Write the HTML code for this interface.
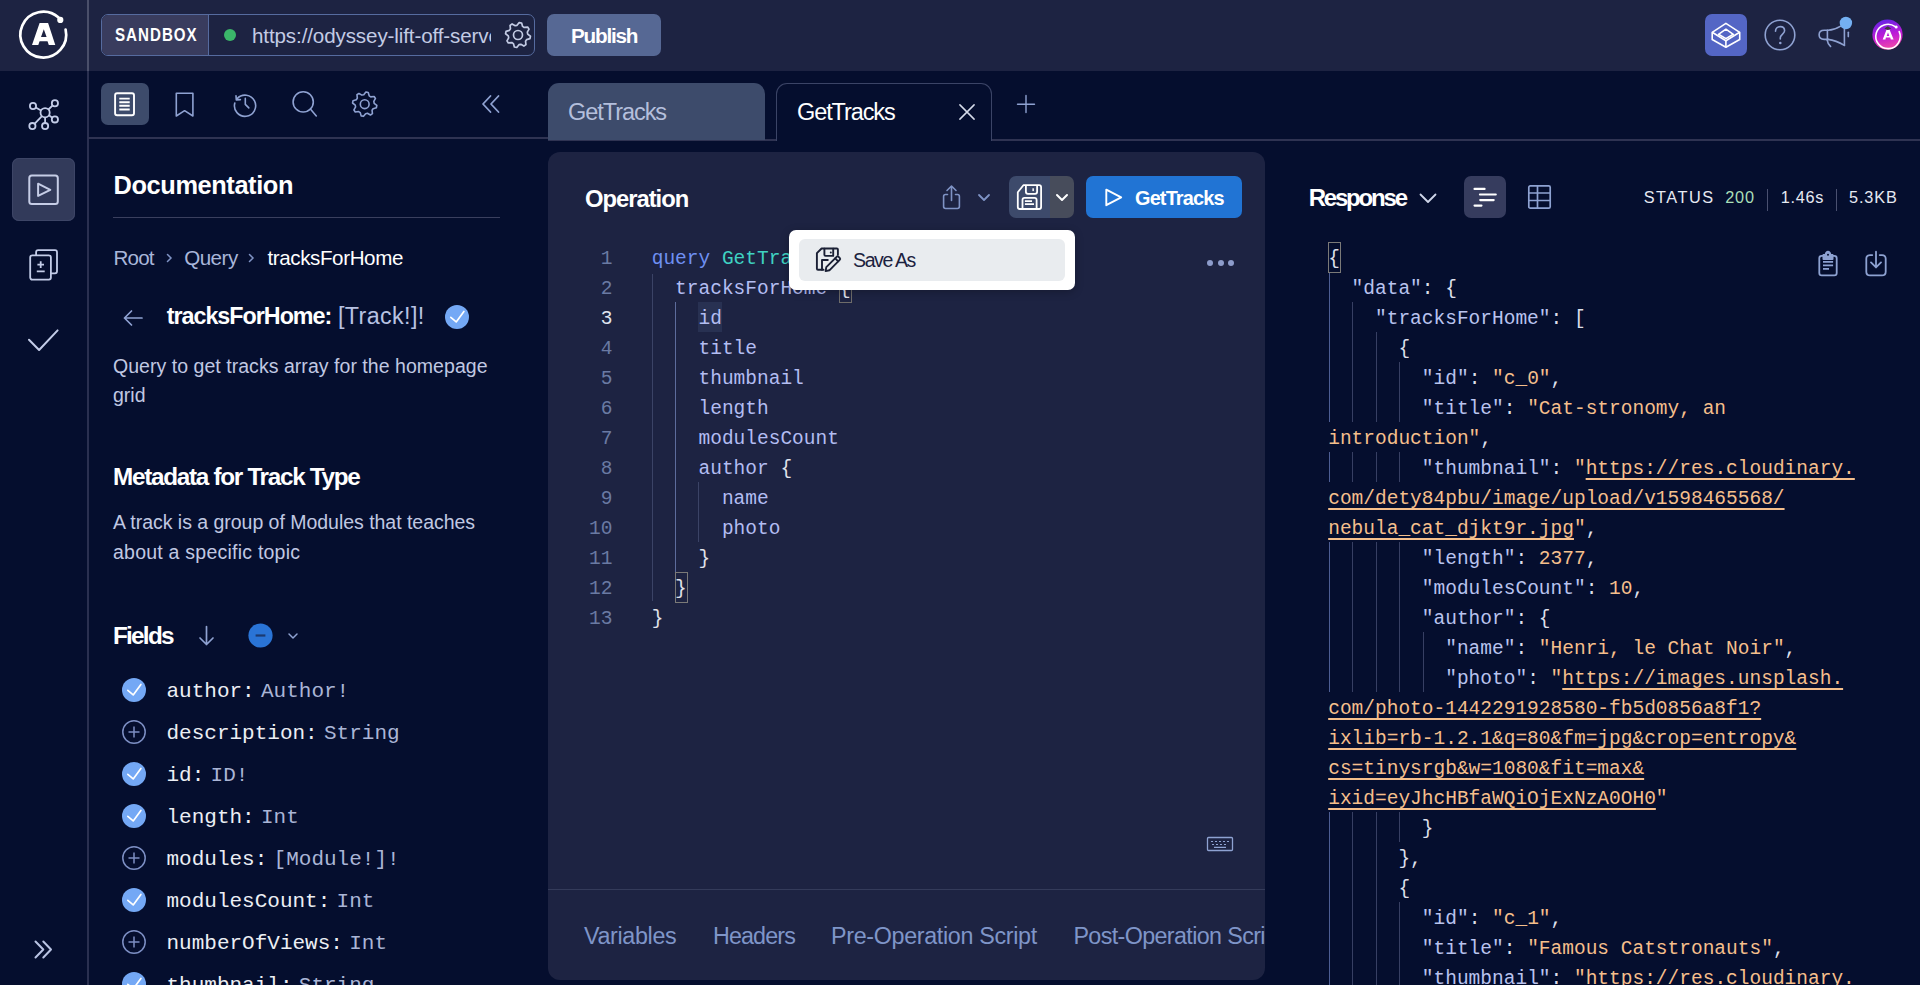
<!DOCTYPE html><html><head><meta charset="utf-8"><style>
html,body{margin:0;padding:0;width:1920px;height:985px;overflow:hidden;background:#050e2e;}
body{position:relative;font-family:'Liberation Sans', sans-serif;}
</style></head><body>
<div style="position:absolute;left:0px;top:0px;width:1920px;height:71px;background:#1d2342;"></div>
<div style="position:absolute;left:87px;top:0px;width:2px;height:71px;background:#4a4f6a;"></div>
<div style="position:absolute;left:87px;top:71px;width:2px;height:914px;background:#2a3050;"></div>
<svg style="position:absolute;left:14px;top:6px;" width="60" height="60" viewBox="0 0 60 60" fill="none"><path d="M44.6 11.6 A22.9 22.9 0 1 0 51.6 23.5" stroke="#fff" stroke-width="2.7" stroke-linecap="round"/>
<circle cx="46.3" cy="13.9" r="3.1" fill="#fff"/>
<path fill-rule="evenodd" d="M18 39 L25.6 17 L34.1 17 L41.3 39 L34.8 39 L33.5 35.3 L25.6 35.3 L24.3 39 Z M29.8 23.2 L27 30.9 L32.6 30.9 Z" fill="#fff"/></svg>
<div style="position:absolute;left:101px;top:14px;width:432px;height:40px;border:1.5px solid #566b9f;border-radius:7px;background:#1d2342;overflow:hidden"><div style="position:absolute;left:0;top:0;width:106px;height:40px;background:#393c5e;border-right:1.5px solid #566b9f"></div></div>
<div id="t_sandbox" style="position:absolute;left:114.50px;top:23.16px;height:25px;line-height:25px;font-family:'Liberation Sans', sans-serif;font-size:18px;font-weight:700;color:#ffffff;white-space:pre;letter-spacing:1.200px;transform:scaleX(0.8403);transform-origin:0 0;">SANDBOX</div>
<div style="position:absolute;left:224px;top:29px;width:12px;height:12px;border-radius:6px;background:#3bb76a"></div>
<div style="position:absolute;left:250px;top:14px;width:241px;height:42px;overflow:hidden">
<div id="t_url" style="position:absolute;left:2.00px;top:7.16px;height:29px;line-height:29px;font-family:'Liberation Sans', sans-serif;font-size:20.6px;font-weight:400;color:#c3cbe4;white-space:pre;letter-spacing:0.000px;letter-spacing:-0.12px">https://odyssey-lift-off-server.herokuapp.com/</div>
</div>
<svg style="position:absolute;left:500px;top:17px;" width="36" height="36" viewBox="0 0 36 36" fill="none"><path d="M19.23 5.56 L21.63 6.04 L22.60 9.40 L24.19 10.46 L27.66 10.07 L29.02 12.11 L27.33 15.17 L27.70 17.04 L30.44 19.23 L29.96 21.63 L26.60 22.60 L25.54 24.19 L25.93 27.66 L23.89 29.02 L20.83 27.33 L18.96 27.70 L16.77 30.44 L14.37 29.96 L13.40 26.60 L11.81 25.54 L8.34 25.93 L6.98 23.89 L8.67 20.83 L8.30 18.96 L5.56 16.77 L6.04 14.37 L9.40 13.40 L10.46 11.81 L10.07 8.34 L12.11 6.98 L15.17 8.67 L17.04 8.30 Z" stroke="#c3cbe4" stroke-width="1.7" stroke-linejoin="round"/><circle cx="18" cy="18" r="4.50" stroke="#c3cbe4" stroke-width="1.7"/></svg>
<div style="position:absolute;left:547px;top:14px;width:114px;height:42px;background:#566894;border-radius:7px;"></div>
<div id="t_publish" style="position:absolute;left:571.00px;top:21.32px;height:29px;line-height:29px;font-family:'Liberation Sans', sans-serif;font-size:20.7px;font-weight:700;color:#ffffff;white-space:pre;letter-spacing:-1.203px;">Publish</div>
<div style="position:absolute;left:1705px;top:14px;width:42px;height:42px;background:#5466c5;border-radius:7px;"></div>
<svg style="position:absolute;left:1705px;top:14px;" width="42" height="42" viewBox="0 0 42 42" fill="none"><g stroke="#fff" stroke-width="1.6" stroke-linejoin="round" fill="none">
<path d="M20.9 9.4 L34.7 18.3 L34.7 25.5 L20.9 33.3 L7.2 25.5 L7.2 18.3 Z"/>
<path d="M7.2 18.3 L20.9 26.7 L34.7 18.3"/><path d="M20.9 26.7 L20.9 33.3"/>
<path d="M20.9 15.2 L28.3 20.3 L20.9 24.6 L13.5 20.3 Z"/></g></svg>
<svg style="position:absolute;left:1762px;top:17px;" width="36" height="36" viewBox="0 0 36 36" fill="none"><circle cx="18" cy="18" r="14.8" stroke="#8fa2d2" stroke-width="1.6"/>
<path d="M13.5 14.3 C13.5 11.3 15.7 9.6 18.2 9.6 C20.8 9.6 22.6 11.4 22.6 13.8 C22.6 16.8 18.3 17.4 18.3 20.8 L18.3 22" stroke="#8fa2d2" stroke-width="1.6" stroke-linecap="round"/>
<circle cx="18.3" cy="26" r="1.3" fill="#8fa2d2"/></svg>
<svg style="position:absolute;left:1814px;top:15px;" width="40" height="40" viewBox="0 0 40 40" fill="none"><g stroke="#8fa2d2" stroke-width="1.6" stroke-linejoin="round" stroke-linecap="round" fill="none">
<path d="M14 15.3 Q20.5 15 26.7 11.1"/><path d="M30.4 13.75 L30.4 30.4"/><path d="M14 24.4 Q22 25.3 30.4 30.4"/>
<path d="M13.4 15.3 L13.4 25.3"/><path d="M13.4 15.3 L10.3 15.3 Q5.1 15.3 5.1 19.85 Q5.1 24.4 10.3 24.4 L14 24.4"/>
<path d="M13.2 25.2 Q13.8 29.5 16.6 31.5"/><path d="M34.3 17.3 L34.3 21.6"/></g>
<circle cx="31.9" cy="8" r="6.2" fill="#74b0f2"/></svg>
<svg style="position:absolute;left:1872.2px;top:19px" width="31" height="31" viewBox="0 0 31 31"><defs><linearGradient id="av" x1="0.3" y1="0" x2="0.5" y2="1"><stop offset="0" stop-color="#6224e6"/><stop offset="0.55" stop-color="#c01bd6"/><stop offset="1" stop-color="#f24aa6"/></linearGradient></defs>
<circle cx="15.5" cy="15.5" r="15.1" fill="url(#av)"/>
<path d="M23.2 7.6 A12.2 12.2 0 1 0 27.2 12.6" stroke="#fff" stroke-width="1.6" fill="none" stroke-linecap="round"/><circle cx="24.2" cy="7.9" r="1.5" fill="#fff"/>
<path fill-rule="evenodd" d="M10.7 20.4 L14.5 10.8 L17.6 10.8 L21.6 20.4 L18.8 20.4 L18.2 18.6 L13.9 18.6 L13.4 20.4 Z M16 13.6 L14.7 16.9 L17.3 16.9 Z" fill="#fff"/>
<path d="M12.3 9.4 L15.8 7.3 L19.2 9.4 L15.8 11 Z" fill="#3d3b40"/></svg>
<div style="position:absolute;left:0px;top:71px;width:87px;height:914px;background:#050e2e;"></div>
<svg style="position:absolute;left:25px;top:95px;" width="40" height="40" viewBox="0 0 40 40" fill="none"><g stroke="#c3cce8" stroke-width="1.8" fill="none"><circle cx="20.1" cy="17.7" r="4.6"/><circle cx="8" cy="11" r="3.1"/><circle cx="29.9" cy="8.3" r="3.1"/><circle cx="29.9" cy="24.4" r="3.1"/><circle cx="7.4" cy="31.1" r="3.1"/><circle cx="20.1" cy="31.1" r="3.1"/><path d="M16.08 15.47 L10.71 12.50 M23.42 14.52 L27.66 10.45 M23.90 20.30 L27.34 22.65 M16.94 21.04 L9.53 28.85 M20.10 22.30 L20.10 28.00"/></g></svg>
<div style="position:absolute;left:12px;top:158px;width:63px;height:63px;background:#323a5a;border-radius:7px;box-shadow:inset 0 0 0 1px #3d4566;"></div>
<svg style="position:absolute;left:25px;top:169px;" width="40" height="40" viewBox="0 0 40 40" fill="none"><rect x="4.3" y="6.6" width="28.5" height="28.4" rx="2.5" stroke="#c6cde6" stroke-width="2"/>
<path d="M13.1 14.7 L25.3 20.8 L13.1 26.9 Z" stroke="#c6cde6" stroke-width="2" stroke-linejoin="round"/></svg>
<svg style="position:absolute;left:23px;top:245px;" width="40" height="40" viewBox="0 0 40 40" fill="none"><g stroke="#c3cce8" stroke-width="1.8" fill="none" stroke-linejoin="round">
<path d="M13.1 10.4 L13.1 7.2 Q13.1 5.2 15.1 5.2 L32 5.2 Q34 5.2 34 7.2 L34 26.3 Q34 28.3 32 28.3 L27.9 28.3"/>
<rect x="7.2" y="10.4" width="20.7" height="24.2" rx="2"/>
<path d="M17.7 16.3 L17.7 23 M14.4 19.7 L21 19.7 M13.8 26.3 L21.7 26.3"/></g></svg>
<svg style="position:absolute;left:23px;top:319.5px;" width="40" height="40" viewBox="0 0 40 40" fill="none"><path d="M6 19.7 L16.1 30 L34.6 10.4" stroke="#c3cce8" stroke-width="2" fill="none" stroke-linecap="round" stroke-linejoin="round"/></svg>
<svg style="position:absolute;left:29px;top:934.7px;" width="30" height="30" viewBox="0 0 30 30" fill="none"><path d="M6.5 6.5 L14.3 14.5 L6.5 22.5 M14.3 6.5 L22 14.5 L14.3 22.5" stroke="#b9c3e3" stroke-width="2" fill="none" stroke-linecap="round" stroke-linejoin="round"/></svg>
<div style="position:absolute;left:101px;top:83px;width:48px;height:42px;background:#3d4b6b;border-radius:7px;"></div>
<svg style="position:absolute;left:110px;top:89px;" width="30" height="30" viewBox="0 0 30 30" fill="none"><rect x="5.1" y="4.3" width="18.9" height="21.9" rx="2" stroke="#fff" stroke-width="1.9"/>
<path d="M9.3 9.6 L19.7 9.6 M9.3 13.2 L19.7 13.2 M9.3 16.8 L19.7 16.8 M9.3 20.5 L19.7 20.5" stroke="#fff" stroke-width="1.9"/></svg>
<svg style="position:absolute;left:170px;top:89px;" width="30" height="30" viewBox="0 0 30 30" fill="none"><path d="M6.3 4.3 L22.9 4.3 L22.9 27 L14.6 21.7 L6.3 27 Z" stroke="#8fa2d2" stroke-width="1.6" stroke-linejoin="round"/></svg>
<svg style="position:absolute;left:230px;top:89px;" width="30" height="30" viewBox="0 0 30 30" fill="none"><g stroke="#8fa2d2" stroke-width="1.6" fill="none" stroke-linecap="round" stroke-linejoin="round">
<path d="M7.2 9.6 A10.6 10.6 0 1 1 4.8 14"/><path d="M6 6.8 L6.3 10.9 L10.4 10.6"/><path d="M15.3 9.4 L15.3 15.4 L18.8 18.9"/></g></svg>
<svg style="position:absolute;left:289px;top:89px;" width="30" height="30" viewBox="0 0 30 30" fill="none"><g stroke="#8fa2d2" stroke-width="1.6" fill="none" stroke-linecap="round">
<circle cx="14.2" cy="12.9" r="10.1"/><path d="M21.4 20.1 L27.3 27"/></g></svg>
<svg style="position:absolute;left:349px;top:89px;" width="30" height="30" viewBox="0 0 30 30" fill="none"><path d="M16.90 3.06 L19.24 3.53 L20.19 6.81 L21.74 7.84 L25.13 7.46 L26.46 9.45 L24.81 12.44 L25.17 14.27 L27.84 16.40 L27.37 18.74 L24.09 19.69 L23.06 21.24 L23.44 24.63 L21.45 25.96 L18.46 24.31 L16.63 24.67 L14.50 27.34 L12.16 26.87 L11.21 23.59 L9.66 22.56 L6.27 22.94 L4.94 20.95 L6.59 17.96 L6.23 16.13 L3.56 14.00 L4.03 11.66 L7.31 10.71 L8.34 9.16 L7.96 5.77 L9.95 4.44 L12.94 6.09 L14.77 5.73 Z" stroke="#8fa2d2" stroke-width="1.6" stroke-linejoin="round"/><circle cx="15.7" cy="15.2" r="4.39" stroke="#8fa2d2" stroke-width="1.6"/></svg>
<svg style="position:absolute;left:476px;top:89px;" width="30" height="30" viewBox="0 0 30 30" fill="none"><path d="M14.5 7 L7 15 L14.5 23 M22.5 7 L15 15 L22.5 23" stroke="#8fa2d2" stroke-width="1.8" fill="none" stroke-linecap="round" stroke-linejoin="round"/></svg>
<div style="position:absolute;left:88px;top:137px;width:460px;height:2px;background:#2f3352;"></div>
<div style="position:absolute;left:548px;top:139px;width:1372px;height:2px;background:#2f3352;"></div>
<div style="position:absolute;left:548px;top:83px;width:217px;height:57px;background:#3d4b6b;border-radius:11px 11px 0 0"></div>
<div id="t_tab1" style="position:absolute;left:568.00px;top:95.85px;height:33px;line-height:33px;font-family:'Liberation Sans', sans-serif;font-size:23.5px;font-weight:400;color:#b4bfdc;white-space:pre;letter-spacing:-1.052px;">GetTracks</div>
<div style="position:absolute;left:776px;top:83px;width:214px;height:57px;background:#050e2e;border:1.5px solid #3b4466;border-bottom:none;border-radius:11px 11px 0 0"></div>
<div id="t_tab2" style="position:absolute;left:797.00px;top:95.85px;height:33px;line-height:33px;font-family:'Liberation Sans', sans-serif;font-size:23.5px;font-weight:400;color:#ffffff;white-space:pre;letter-spacing:-1.102px;">GetTracks</div>
<svg style="position:absolute;left:955px;top:100px;" width="24" height="24" viewBox="0 0 24 24" fill="none"><path d="M4.9 4.9 L19.1 19.1 M19.1 4.9 L4.9 19.1" stroke="#d6dbea" stroke-width="1.5" stroke-linecap="round"/></svg>
<svg style="position:absolute;left:1013.5px;top:92px;" width="24" height="24" viewBox="0 0 24 24" fill="none"><path d="M12 3.5 L12 20.5 M3.5 12.3 L20.5 12.3" stroke="#8fa2d2" stroke-width="1.4" stroke-linecap="round"/></svg>
<div style="position:absolute;left:548px;top:152px;width:717px;height:828px;background:#1d2342;border-radius:12px;"></div>
<div id="t_operation" style="position:absolute;left:585.00px;top:181.55px;height:33px;line-height:33px;font-family:'Liberation Sans', sans-serif;font-size:23.8px;font-weight:700;color:#ffffff;white-space:pre;letter-spacing:-1.024px;">Operation</div>
<svg style="position:absolute;left:938px;top:182px;" width="28" height="32" viewBox="0 0 28 32" fill="none"><g stroke="#7f93c5" stroke-width="1.6" fill="none" stroke-linecap="round" stroke-linejoin="round">
<path d="M13.5 4 L13.5 18.5 M9 8.5 L13.5 4 L18 8.5"/><path d="M9.5 12.5 L7.5 12.5 Q5.6 12.5 5.6 14.4 L5.6 24.6 Q5.6 26.5 7.5 26.5 L19.5 26.5 Q21.4 26.5 21.4 24.6 L21.4 14.4 Q21.4 12.5 19.5 12.5 L17.5 12.5"/></g></svg>
<svg style="position:absolute;left:976px;top:189px;" width="16" height="16" viewBox="0 0 16 16" fill="none"><path d="M3 6 L8 11 L13 6" stroke="#7f93c5" stroke-width="1.8" fill="none" stroke-linecap="round" stroke-linejoin="round"/></svg>
<div style="position:absolute;left:1009px;top:176px;width:65px;height:42px;border-radius:7px;overflow:hidden"><div style="position:absolute;left:0;top:0;width:41px;height:42px;background:#3d4a6b"></div><div style="position:absolute;left:41px;top:0;width:24px;height:42px;background:#474c5b"></div></div>
<svg style="position:absolute;left:1014px;top:181px;" width="32" height="32" viewBox="0 0 32 32" fill="none"><g stroke="#fff" stroke-width="1.8" fill="none" stroke-linejoin="round">
<path d="M3.8 11.3 L9.4 4.2 L25.1 4.2 Q27.1 4.2 27.1 6.2 L27.1 26 Q27.1 28 25.1 28 L5.8 28 Q3.8 28 3.8 26 Z"/>
<path d="M11.9 4.5 L11.9 10.8 Q11.9 12.8 13.9 12.8 L21.1 12.8 Q23.1 12.8 23.1 10.8 L23.1 4.5"/>
<path d="M8.5 28 L8.5 18.9 Q8.5 16.9 10.5 16.9 L20.6 16.9 Q22.6 16.9 22.6 18.9 L22.6 28"/>
<path d="M10.9 20.2 L18 20.2 M10.9 23.1 L20 23.1"/></g><rect x="18.4" y="7.3" width="1.5" height="2.8" fill="#fff"/></svg>
<svg style="position:absolute;left:1054px;top:189px;" width="16" height="16" viewBox="0 0 16 16" fill="none"><path d="M3 6 L8 11 L13 6" stroke="#ffffff" stroke-width="2" fill="none" stroke-linecap="round" stroke-linejoin="round"/></svg>
<div style="position:absolute;left:1086px;top:176px;width:156px;height:42px;background:#2174d4;border-radius:7px;"></div>
<svg style="position:absolute;left:1100px;top:185px;" width="26" height="26" viewBox="0 0 26 26" fill="none"><path d="M6.3 4.6 L21.2 12.3 L6.3 20.2 Z" stroke="#fff" stroke-width="1.9" stroke-linejoin="round" fill="none"/></svg>
<div id="t_run" style="position:absolute;left:1135.00px;top:183.80px;height:28px;line-height:28px;font-family:'Liberation Sans', sans-serif;font-size:19.9px;font-weight:700;color:#ffffff;white-space:pre;letter-spacing:-0.838px;">GetTracks</div>
<div style="position:absolute;left:1206.9px;top:259.7px;width:6.6px;height:6.6px;border-radius:4px;background:#8d9ccb"></div>
<div style="position:absolute;left:1217.5px;top:259.7px;width:6.6px;height:6.6px;border-radius:4px;background:#8d9ccb"></div>
<div style="position:absolute;left:1227.9px;top:259.7px;width:6.6px;height:6.6px;border-radius:4px;background:#8d9ccb"></div>
<svg style="position:absolute;left:1206px;top:834px;" width="28" height="20" viewBox="0 0 28 20" fill="none"><rect x="1.5" y="3.5" width="25" height="13" rx="1" stroke="#8ea2d2" stroke-width="1.3"/>
<path d="M5 7.5 L7 7.5 M9 7.5 L11 7.5 M13 7.5 L15 7.5 M17 7.5 L19 7.5 M21 7.5 L23 7.5 M6 10.5 L8 10.5 M10 10.5 L12 10.5 M14 10.5 L16 10.5 M18 10.5 L20 10.5 M8 13.3 L20 13.3" stroke="#8ea2d2" stroke-width="1.2"/></svg>
<div style="position:absolute;left:548px;top:889px;width:717px;height:1px;background:#343b5a;"></div>
<div id="t_vars" style="position:absolute;left:584.00px;top:919.92px;height:33px;line-height:33px;font-family:'Liberation Sans', sans-serif;font-size:23.3px;font-weight:400;color:#7f95c8;white-space:pre;letter-spacing:-0.338px;">Variables</div>
<div id="t_hdrs" style="position:absolute;left:713.00px;top:919.92px;height:33px;line-height:33px;font-family:'Liberation Sans', sans-serif;font-size:23.3px;font-weight:400;color:#7f95c8;white-space:pre;letter-spacing:-0.877px;">Headers</div>
<div id="t_pre" style="position:absolute;left:831.00px;top:919.92px;height:33px;line-height:33px;font-family:'Liberation Sans', sans-serif;font-size:23.3px;font-weight:400;color:#7f95c8;white-space:pre;letter-spacing:-0.324px;">Pre-Operation Script</div>
<div style="position:absolute;left:1060px;top:900px;width:205px;height:70px;overflow:hidden">
<div id="t_post" style="position:absolute;left:13.40px;top:19.92px;height:33px;line-height:33px;font-family:'Liberation Sans', sans-serif;font-size:23.3px;font-weight:400;color:#7f95c8;white-space:pre;letter-spacing:0.000px;letter-spacing:-0.62px">Post-Operation Script</div>
</div>
<div style="position:absolute;left:652px;top:274px;width:1px;height:327px;background:#3b4366;"></div>
<div style="position:absolute;left:675px;top:302px;width:1px;height:271px;background:#5d6c9c;"></div>
<div style="position:absolute;left:698px;top:482px;width:1px;height:60px;background:#3b4366;"></div>
<div style="position:absolute;left:698px;top:302px;width:24px;height:30px;background:#283152;"></div>
<div style="position:absolute;left:839px;top:289px;width:13px;height:14px;background:transparent;border:1.5px solid #6e6c6a;box-sizing:border-box;"></div>
<div style="position:absolute;left:675px;top:572px;width:13px;height:31px;background:transparent;border:1.5px solid #7b7a78;box-sizing:border-box;"></div>
<div id="t_ln1" style="position:absolute;left:600.80px;top:245.80px;height:27px;line-height:27px;font-family:'Liberation Mono', monospace;font-size:19.5px;font-weight:400;color:#6a7aa3;white-space:pre;letter-spacing:0.000px;">1</div>
<div id="t_code1" style="position:absolute;left:651.70px;top:245.80px;height:27px;line-height:27px;font-family:'Liberation Mono', monospace;font-size:19.5px;font-weight:400;color:#dfe3ee;white-space:pre;letter-spacing:0.000px;"><span style="color:#6f90f2">query </span><span style="color:#3fd2c2">GetTracks</span><span style="color:#e0e2ea"> {</span></div>
<div id="t_ln2" style="position:absolute;left:600.80px;top:275.80px;height:27px;line-height:27px;font-family:'Liberation Mono', monospace;font-size:19.5px;font-weight:400;color:#6a7aa3;white-space:pre;letter-spacing:0.000px;">2</div>
<div id="t_code2" style="position:absolute;left:651.70px;top:275.80px;height:27px;line-height:27px;font-family:'Liberation Mono', monospace;font-size:19.5px;font-weight:400;color:#dfe3ee;white-space:pre;letter-spacing:0.000px;"><span style="color:#b3bdf2">  tracksForHome</span><span style="color:#e0e2ea"> {</span></div>
<div id="t_ln3" style="position:absolute;left:600.80px;top:305.80px;height:27px;line-height:27px;font-family:'Liberation Mono', monospace;font-size:19.5px;font-weight:400;color:#dfe3ee;white-space:pre;letter-spacing:0.000px;">3</div>
<div id="t_code3" style="position:absolute;left:651.70px;top:305.80px;height:27px;line-height:27px;font-family:'Liberation Mono', monospace;font-size:19.5px;font-weight:400;color:#dfe3ee;white-space:pre;letter-spacing:0.000px;"><span style="color:#b3bdf2">    id</span></div>
<div id="t_ln4" style="position:absolute;left:600.80px;top:335.80px;height:27px;line-height:27px;font-family:'Liberation Mono', monospace;font-size:19.5px;font-weight:400;color:#6a7aa3;white-space:pre;letter-spacing:0.000px;">4</div>
<div id="t_code4" style="position:absolute;left:651.70px;top:335.80px;height:27px;line-height:27px;font-family:'Liberation Mono', monospace;font-size:19.5px;font-weight:400;color:#dfe3ee;white-space:pre;letter-spacing:0.000px;"><span style="color:#b3bdf2">    title</span></div>
<div id="t_ln5" style="position:absolute;left:600.80px;top:365.80px;height:27px;line-height:27px;font-family:'Liberation Mono', monospace;font-size:19.5px;font-weight:400;color:#6a7aa3;white-space:pre;letter-spacing:0.000px;">5</div>
<div id="t_code5" style="position:absolute;left:651.70px;top:365.80px;height:27px;line-height:27px;font-family:'Liberation Mono', monospace;font-size:19.5px;font-weight:400;color:#dfe3ee;white-space:pre;letter-spacing:0.000px;"><span style="color:#b3bdf2">    thumbnail</span></div>
<div id="t_ln6" style="position:absolute;left:600.80px;top:395.80px;height:27px;line-height:27px;font-family:'Liberation Mono', monospace;font-size:19.5px;font-weight:400;color:#6a7aa3;white-space:pre;letter-spacing:0.000px;">6</div>
<div id="t_code6" style="position:absolute;left:651.70px;top:395.80px;height:27px;line-height:27px;font-family:'Liberation Mono', monospace;font-size:19.5px;font-weight:400;color:#dfe3ee;white-space:pre;letter-spacing:0.000px;"><span style="color:#b3bdf2">    length</span></div>
<div id="t_ln7" style="position:absolute;left:600.80px;top:425.80px;height:27px;line-height:27px;font-family:'Liberation Mono', monospace;font-size:19.5px;font-weight:400;color:#6a7aa3;white-space:pre;letter-spacing:0.000px;">7</div>
<div id="t_code7" style="position:absolute;left:651.70px;top:425.80px;height:27px;line-height:27px;font-family:'Liberation Mono', monospace;font-size:19.5px;font-weight:400;color:#dfe3ee;white-space:pre;letter-spacing:0.000px;"><span style="color:#b3bdf2">    modulesCount</span></div>
<div id="t_ln8" style="position:absolute;left:600.80px;top:455.80px;height:27px;line-height:27px;font-family:'Liberation Mono', monospace;font-size:19.5px;font-weight:400;color:#6a7aa3;white-space:pre;letter-spacing:0.000px;">8</div>
<div id="t_code8" style="position:absolute;left:651.70px;top:455.80px;height:27px;line-height:27px;font-family:'Liberation Mono', monospace;font-size:19.5px;font-weight:400;color:#dfe3ee;white-space:pre;letter-spacing:0.000px;"><span style="color:#b3bdf2">    author</span><span style="color:#e0e2ea"> {</span></div>
<div id="t_ln9" style="position:absolute;left:600.80px;top:485.80px;height:27px;line-height:27px;font-family:'Liberation Mono', monospace;font-size:19.5px;font-weight:400;color:#6a7aa3;white-space:pre;letter-spacing:0.000px;">9</div>
<div id="t_code9" style="position:absolute;left:651.70px;top:485.80px;height:27px;line-height:27px;font-family:'Liberation Mono', monospace;font-size:19.5px;font-weight:400;color:#dfe3ee;white-space:pre;letter-spacing:0.000px;"><span style="color:#b3bdf2">      name</span></div>
<div id="t_ln10" style="position:absolute;left:589.10px;top:515.80px;height:27px;line-height:27px;font-family:'Liberation Mono', monospace;font-size:19.5px;font-weight:400;color:#6a7aa3;white-space:pre;letter-spacing:0.000px;">10</div>
<div id="t_code10" style="position:absolute;left:651.70px;top:515.80px;height:27px;line-height:27px;font-family:'Liberation Mono', monospace;font-size:19.5px;font-weight:400;color:#dfe3ee;white-space:pre;letter-spacing:0.000px;"><span style="color:#b3bdf2">      photo</span></div>
<div id="t_ln11" style="position:absolute;left:589.10px;top:545.80px;height:27px;line-height:27px;font-family:'Liberation Mono', monospace;font-size:19.5px;font-weight:400;color:#6a7aa3;white-space:pre;letter-spacing:0.000px;">11</div>
<div id="t_code11" style="position:absolute;left:651.70px;top:545.80px;height:27px;line-height:27px;font-family:'Liberation Mono', monospace;font-size:19.5px;font-weight:400;color:#dfe3ee;white-space:pre;letter-spacing:0.000px;"><span style="color:#e0e2ea">    }</span></div>
<div id="t_ln12" style="position:absolute;left:589.10px;top:575.80px;height:27px;line-height:27px;font-family:'Liberation Mono', monospace;font-size:19.5px;font-weight:400;color:#6a7aa3;white-space:pre;letter-spacing:0.000px;">12</div>
<div id="t_code12" style="position:absolute;left:651.70px;top:575.80px;height:27px;line-height:27px;font-family:'Liberation Mono', monospace;font-size:19.5px;font-weight:400;color:#dfe3ee;white-space:pre;letter-spacing:0.000px;"><span style="color:#e0e2ea">  }</span></div>
<div id="t_ln13" style="position:absolute;left:589.10px;top:605.80px;height:27px;line-height:27px;font-family:'Liberation Mono', monospace;font-size:19.5px;font-weight:400;color:#6a7aa3;white-space:pre;letter-spacing:0.000px;">13</div>
<div id="t_code13" style="position:absolute;left:651.70px;top:605.80px;height:27px;line-height:27px;font-family:'Liberation Mono', monospace;font-size:19.5px;font-weight:400;color:#dfe3ee;white-space:pre;letter-spacing:0.000px;"><span style="color:#e0e2ea">}</span></div>
<div style="position:absolute;left:789px;top:230px;width:286px;height:60px;background:#ffffff;border-radius:7px;box-shadow:0 2px 8px rgba(0,0,0,0.25);"></div>
<div style="position:absolute;left:799px;top:239px;width:266px;height:42px;background:#e9ecef;border-radius:6px;"></div>
<svg style="position:absolute;left:812px;top:245px;" width="32" height="30" viewBox="0 0 32 30" fill="none"><g stroke="#1b2035" stroke-width="1.9" fill="none" stroke-linejoin="round" stroke-linecap="round">
<path d="M11.5 24.8 L6 24.8 Q4.9 24.8 4.9 23.7 L4.9 8.2 L9.6 3.5 L24.8 3.5 Q25.9 3.5 25.9 4.6 L25.9 9.8"/>
<path d="M12.4 3.8 L12.4 9.8 Q12.4 10.9 13.5 10.9 L21.2 10.9 L21.2 3.8"/>
<path d="M15.8 15 L10 15 L10 24.8"/>
<path d="M13.6 26.1 L14.3 22.2 L24.6 11.8 Q25.6 10.8 26.6 11.8 L27.7 12.9 Q28.7 13.9 27.7 14.9 L17.4 25.3 Z"/><path d="M23.2 13.3 L26.2 16.3"/></g>
<circle cx="18.8" cy="7.4" r="1" fill="#1b2035"/></svg>
<div id="t_saveas" style="position:absolute;left:853.00px;top:247.24px;height:27px;line-height:27px;font-family:'Liberation Sans', sans-serif;font-size:19.5px;font-weight:400;color:#1c2240;white-space:pre;letter-spacing:-1.376px;">Save As</div>
<div id="t_doc" style="position:absolute;left:113.60px;top:167.09px;height:36px;line-height:36px;font-family:'Liberation Sans', sans-serif;font-size:25.4px;font-weight:700;color:#ffffff;white-space:pre;letter-spacing:-0.416px;">Documentation</div>
<div style="position:absolute;left:113px;top:217px;width:387px;height:1px;background:#3a3f5e;"></div>
<div id="t_bc_root" style="position:absolute;left:113.50px;top:243.36px;height:29px;line-height:29px;font-family:'Liberation Sans', sans-serif;font-size:20.6px;font-weight:400;color:#a9b6da;white-space:pre;letter-spacing:-0.835px;">Root</div>
<svg style="position:absolute;left:163px;top:251px;" width="12" height="14" viewBox="0 0 12 14" fill="none"><path d="M4.5 3.5 L8 7 L4.5 10.5" stroke="#7f93c5" stroke-width="1.5" fill="none" stroke-linecap="round"/></svg>
<div id="t_bc_query" style="position:absolute;left:184.20px;top:243.36px;height:29px;line-height:29px;font-family:'Liberation Sans', sans-serif;font-size:20.6px;font-weight:400;color:#a9b6da;white-space:pre;letter-spacing:-0.522px;">Query</div>
<svg style="position:absolute;left:245px;top:251px;" width="12" height="14" viewBox="0 0 12 14" fill="none"><path d="M4.5 3.5 L8 7 L4.5 10.5" stroke="#7f93c5" stroke-width="1.5" fill="none" stroke-linecap="round"/></svg>
<div id="t_bc_tfh" style="position:absolute;left:267.40px;top:243.36px;height:29px;line-height:29px;font-family:'Liberation Sans', sans-serif;font-size:20.6px;font-weight:400;color:#ffffff;white-space:pre;letter-spacing:-0.396px;">tracksForHome</div>
<svg style="position:absolute;left:120px;top:305px;" width="26" height="26" viewBox="0 0 26 26" fill="none"><path d="M4.5 13 L22 13 M11.5 6 L4.5 13 L11.5 20" stroke="#8fa2d2" stroke-width="1.7" fill="none" stroke-linecap="round" stroke-linejoin="round"/></svg>
<div id="t_tfh" style="position:absolute;left:166.70px;top:300.02px;height:33px;line-height:33px;font-family:'Liberation Sans', sans-serif;font-size:23.3px;font-weight:700;color:#ffffff;white-space:pre;letter-spacing:-1.006px;">tracksForHome:</div>
<div id="t_track" style="position:absolute;left:338.00px;top:300.02px;height:33px;line-height:33px;font-family:'Liberation Sans', sans-serif;font-size:23.3px;font-weight:400;color:#b7c2e2;white-space:pre;letter-spacing:0.365px;">[Track!]!</div>
<svg style="position:absolute;left:445px;top:305px" width="24" height="24" viewBox="0 0 24 24"><circle cx="12" cy="12" r="12" fill="#74a8f5"/><path d="M5.8 12.3 L11.2 16.9 L18.9 6.5" stroke="#fff" stroke-width="1.7" fill="none" stroke-linecap="round" stroke-linejoin="round"/></svg>
<div id="t_desc1" style="position:absolute;left:113.00px;top:352.74px;height:27px;line-height:27px;font-family:'Liberation Sans', sans-serif;font-size:19.5px;font-weight:400;color:#c0c8e2;white-space:pre;letter-spacing:0.040px;">Query to get tracks array for the homepage</div>
<div id="t_desc2" style="position:absolute;left:113.00px;top:381.74px;height:27px;line-height:27px;font-family:'Liberation Sans', sans-serif;font-size:19.5px;font-weight:400;color:#c0c8e2;white-space:pre;letter-spacing:0.000px;">grid</div>
<div id="t_meta" style="position:absolute;left:113.00px;top:460.28px;height:34px;line-height:34px;font-family:'Liberation Sans', sans-serif;font-size:24.3px;font-weight:700;color:#ffffff;white-space:pre;letter-spacing:-1.294px;">Metadata for Track Type</div>
<div id="t_mdesc1" style="position:absolute;left:113.00px;top:508.94px;height:27px;line-height:27px;font-family:'Liberation Sans', sans-serif;font-size:19.5px;font-weight:400;color:#c0c8e2;white-space:pre;letter-spacing:-0.025px;">A track is a group of Modules that teaches</div>
<div id="t_mdesc2" style="position:absolute;left:113.00px;top:538.54px;height:27px;line-height:27px;font-family:'Liberation Sans', sans-serif;font-size:19.5px;font-weight:400;color:#c0c8e2;white-space:pre;letter-spacing:0.233px;">about a specific topic</div>
<div id="t_fields" style="position:absolute;left:113.00px;top:618.58px;height:34px;line-height:34px;font-family:'Liberation Sans', sans-serif;font-size:24.3px;font-weight:700;color:#ffffff;white-space:pre;letter-spacing:-1.745px;">Fields</div>
<svg style="position:absolute;left:194px;top:622px;" width="26" height="28" viewBox="0 0 26 28" fill="none"><path d="M12.5 4.5 L12.5 22.5 M6 16 L12.5 22.5 L19 16" stroke="#8fa2d2" stroke-width="1.7" fill="none" stroke-linecap="round" stroke-linejoin="round"/></svg>
<svg style="position:absolute;left:248px;top:623px" width="25" height="25" viewBox="0 0 25 25"><circle cx="12.5" cy="12.5" r="12.1" fill="#2a74d6"/><path d="M7.6 12.5 L17.4 12.5" stroke="#1c3a70" stroke-width="2.2" stroke-linecap="butt"/></svg>
<svg style="position:absolute;left:286px;top:629px;" width="14" height="14" viewBox="0 0 14 14" fill="none"><path d="M3 5 L7 9 L11 5" stroke="#8fa2d2" stroke-width="1.5" fill="none" stroke-linecap="round" stroke-linejoin="round"/></svg>
<svg style="position:absolute;left:121.5px;top:678.2px" width="24" height="24" viewBox="0 0 24 24"><circle cx="12" cy="12" r="12" fill="#74a8f5"/><path d="M5.8 12.3 L11.2 16.9 L18.9 6.5" stroke="#fff" stroke-width="1.7" fill="none" stroke-linecap="round" stroke-linejoin="round"/></svg>
<div id="t_f_author" style="position:absolute;left:166.50px;top:676.90px;height:29px;line-height:29px;font-family:'Liberation Mono', monospace;font-size:21px;font-weight:400;color:#eceef4;white-space:pre;letter-spacing:0.000px;">author:</div>
<div id="t_ft_author" style="position:absolute;left:261.00px;top:676.90px;height:29px;line-height:29px;font-family:'Liberation Mono', monospace;font-size:21px;font-weight:400;color:#aab5d6;white-space:pre;letter-spacing:0.000px;">Author!</div>
<svg style="position:absolute;left:121.5px;top:720.2px" width="24" height="24" viewBox="0 0 24 24"><circle cx="12" cy="12" r="11.2" stroke="#7d8fc4" stroke-width="1.5" fill="none"/><path d="M12 6.5 L12 17.5 M6.5 12 L17.5 12" stroke="#7d8fc4" stroke-width="1.5"/></svg>
<div id="t_f_description" style="position:absolute;left:166.50px;top:718.90px;height:29px;line-height:29px;font-family:'Liberation Mono', monospace;font-size:21px;font-weight:400;color:#eceef4;white-space:pre;letter-spacing:0.000px;">description:</div>
<div id="t_ft_description" style="position:absolute;left:324.00px;top:718.90px;height:29px;line-height:29px;font-family:'Liberation Mono', monospace;font-size:21px;font-weight:400;color:#aab5d6;white-space:pre;letter-spacing:0.000px;">String</div>
<svg style="position:absolute;left:121.5px;top:762.2px" width="24" height="24" viewBox="0 0 24 24"><circle cx="12" cy="12" r="12" fill="#74a8f5"/><path d="M5.8 12.3 L11.2 16.9 L18.9 6.5" stroke="#fff" stroke-width="1.7" fill="none" stroke-linecap="round" stroke-linejoin="round"/></svg>
<div id="t_f_id" style="position:absolute;left:166.50px;top:760.90px;height:29px;line-height:29px;font-family:'Liberation Mono', monospace;font-size:21px;font-weight:400;color:#eceef4;white-space:pre;letter-spacing:0.000px;">id:</div>
<div id="t_ft_id" style="position:absolute;left:210.60px;top:760.90px;height:29px;line-height:29px;font-family:'Liberation Mono', monospace;font-size:21px;font-weight:400;color:#aab5d6;white-space:pre;letter-spacing:0.000px;">ID!</div>
<svg style="position:absolute;left:121.5px;top:804.2px" width="24" height="24" viewBox="0 0 24 24"><circle cx="12" cy="12" r="12" fill="#74a8f5"/><path d="M5.8 12.3 L11.2 16.9 L18.9 6.5" stroke="#fff" stroke-width="1.7" fill="none" stroke-linecap="round" stroke-linejoin="round"/></svg>
<div id="t_f_length" style="position:absolute;left:166.50px;top:802.90px;height:29px;line-height:29px;font-family:'Liberation Mono', monospace;font-size:21px;font-weight:400;color:#eceef4;white-space:pre;letter-spacing:0.000px;">length:</div>
<div id="t_ft_length" style="position:absolute;left:261.00px;top:802.90px;height:29px;line-height:29px;font-family:'Liberation Mono', monospace;font-size:21px;font-weight:400;color:#aab5d6;white-space:pre;letter-spacing:0.000px;">Int</div>
<svg style="position:absolute;left:121.5px;top:846.2px" width="24" height="24" viewBox="0 0 24 24"><circle cx="12" cy="12" r="11.2" stroke="#7d8fc4" stroke-width="1.5" fill="none"/><path d="M12 6.5 L12 17.5 M6.5 12 L17.5 12" stroke="#7d8fc4" stroke-width="1.5"/></svg>
<div id="t_f_modules" style="position:absolute;left:166.50px;top:844.90px;height:29px;line-height:29px;font-family:'Liberation Mono', monospace;font-size:21px;font-weight:400;color:#eceef4;white-space:pre;letter-spacing:0.000px;">modules:</div>
<div id="t_ft_modules" style="position:absolute;left:273.60px;top:844.90px;height:29px;line-height:29px;font-family:'Liberation Mono', monospace;font-size:21px;font-weight:400;color:#aab5d6;white-space:pre;letter-spacing:0.000px;">[Module!]!</div>
<svg style="position:absolute;left:121.5px;top:888.2px" width="24" height="24" viewBox="0 0 24 24"><circle cx="12" cy="12" r="12" fill="#74a8f5"/><path d="M5.8 12.3 L11.2 16.9 L18.9 6.5" stroke="#fff" stroke-width="1.7" fill="none" stroke-linecap="round" stroke-linejoin="round"/></svg>
<div id="t_f_modulesCount" style="position:absolute;left:166.50px;top:886.90px;height:29px;line-height:29px;font-family:'Liberation Mono', monospace;font-size:21px;font-weight:400;color:#eceef4;white-space:pre;letter-spacing:0.000px;">modulesCount:</div>
<div id="t_ft_modulesCount" style="position:absolute;left:336.60px;top:886.90px;height:29px;line-height:29px;font-family:'Liberation Mono', monospace;font-size:21px;font-weight:400;color:#aab5d6;white-space:pre;letter-spacing:0.000px;">Int</div>
<svg style="position:absolute;left:121.5px;top:930.2px" width="24" height="24" viewBox="0 0 24 24"><circle cx="12" cy="12" r="11.2" stroke="#7d8fc4" stroke-width="1.5" fill="none"/><path d="M12 6.5 L12 17.5 M6.5 12 L17.5 12" stroke="#7d8fc4" stroke-width="1.5"/></svg>
<div id="t_f_numberOfViews" style="position:absolute;left:166.50px;top:928.90px;height:29px;line-height:29px;font-family:'Liberation Mono', monospace;font-size:21px;font-weight:400;color:#eceef4;white-space:pre;letter-spacing:0.000px;">numberOfViews:</div>
<div id="t_ft_numberOfViews" style="position:absolute;left:349.20px;top:928.90px;height:29px;line-height:29px;font-family:'Liberation Mono', monospace;font-size:21px;font-weight:400;color:#aab5d6;white-space:pre;letter-spacing:0.000px;">Int</div>
<svg style="position:absolute;left:121.5px;top:972.2px" width="24" height="24" viewBox="0 0 24 24"><circle cx="12" cy="12" r="12" fill="#74a8f5"/><path d="M5.8 12.3 L11.2 16.9 L18.9 6.5" stroke="#fff" stroke-width="1.7" fill="none" stroke-linecap="round" stroke-linejoin="round"/></svg>
<div id="t_f_thumbnail" style="position:absolute;left:166.50px;top:970.90px;height:29px;line-height:29px;font-family:'Liberation Mono', monospace;font-size:21px;font-weight:400;color:#eceef4;white-space:pre;letter-spacing:0.000px;">thumbnail:</div>
<div id="t_ft_thumbnail" style="position:absolute;left:298.80px;top:970.90px;height:29px;line-height:29px;font-family:'Liberation Mono', monospace;font-size:21px;font-weight:400;color:#aab5d6;white-space:pre;letter-spacing:0.000px;">String</div>
<div id="t_resp" style="position:absolute;left:1308.70px;top:180.68px;height:34px;line-height:34px;font-family:'Liberation Sans', sans-serif;font-size:24px;font-weight:700;color:#ffffff;white-space:pre;letter-spacing:-2.202px;">Response</div>
<svg style="position:absolute;left:1416px;top:186px;" width="24" height="24" viewBox="0 0 24 24" fill="none"><path d="M4.5 8.5 L12 16 L19.5 8.5" stroke="#d0d6ea" stroke-width="1.8" fill="none" stroke-linecap="round" stroke-linejoin="round"/></svg>
<div style="position:absolute;left:1464px;top:176px;width:42px;height:42px;background:#363c5e;border-radius:7px;"></div>
<svg style="position:absolute;left:1464px;top:176px;" width="42" height="42" viewBox="0 0 42 42" fill="none"><path d="M10.5 12.9 L20.6 12.9 M15.9 18.5 L31.8 18.5 M16.2 24.1 L29.7 24.1 M10.5 29.6 L17.5 29.6" stroke="#fff" stroke-width="2.1" stroke-linecap="round"/></svg>
<svg style="position:absolute;left:1526px;top:183px;" width="28" height="28" viewBox="0 0 28 28" fill="none"><rect x="2.8" y="2.8" width="21.4" height="22.4" rx="1.5" stroke="#8ea2d2" stroke-width="1.7"/><path d="M2.8 10 L24.2 10 M2.8 17.5 L24.2 17.5 M11.5 2.8 L11.5 25.2" stroke="#8ea2d2" stroke-width="1.7"/></svg>
<div id="t_status" style="position:absolute;left:1643.70px;top:186.05px;height:23px;line-height:23px;font-family:'Liberation Sans', sans-serif;font-size:16.3px;font-weight:400;color:#e6e9f2;white-space:pre;letter-spacing:1.536px;">STATUS</div>
<div id="t_s200" style="position:absolute;left:1725.20px;top:186.05px;height:23px;line-height:23px;font-family:'Liberation Sans', sans-serif;font-size:16.3px;font-weight:400;color:#a9dfb8;white-space:pre;letter-spacing:0.863px;">200</div>
<div style="position:absolute;left:1767px;top:189px;width:1px;height:22px;background:#4a5070;"></div>
<div id="t_time" style="position:absolute;left:1780.80px;top:186.05px;height:23px;line-height:23px;font-family:'Liberation Sans', sans-serif;font-size:16.3px;font-weight:400;color:#e6e9f2;white-space:pre;letter-spacing:0.666px;">1.46s</div>
<div style="position:absolute;left:1836px;top:189px;width:1px;height:22px;background:#4a5070;"></div>
<div id="t_size" style="position:absolute;left:1849.00px;top:186.05px;height:23px;line-height:23px;font-family:'Liberation Sans', sans-serif;font-size:16.3px;font-weight:400;color:#e6e9f2;white-space:pre;letter-spacing:0.886px;">5.3KB</div>
<svg style="position:absolute;left:1814px;top:248px;" width="28" height="32" viewBox="0 0 28 32" fill="none"><g stroke="#8ea2d2" stroke-width="1.8" fill="none" stroke-linejoin="round">
<path d="M9.2 7.8 L7.7 7.8 Q5.3 7.8 5.3 10.2 L5.3 25 Q5.3 27.4 7.7 27.4 L20.3 27.4 Q22.7 27.4 22.7 25 L22.7 10.2 Q22.7 7.8 20.3 7.8 L18.8 7.8"/>
<path d="M9.4 11 L9.4 7 L11.5 6.6 Q12.2 3.6 14 3.6 Q15.8 3.6 16.5 6.6 L18.6 7 L18.6 11 Z" fill="#8ea2d2"/>
<path d="M9 13.9 L19.1 13.9 M9 17.4 L19.1 17.4 M9 20.9 L15 20.9"/></g><circle cx="14" cy="6.8" r="1" fill="#050e2e"/></svg>
<svg style="position:absolute;left:1861px;top:248px;" width="30" height="32" viewBox="0 0 30 32" fill="none"><g stroke="#8ea2d2" stroke-width="1.8" fill="none" stroke-linejoin="round" stroke-linecap="round">
<path d="M11.3 7.1 L9 7.1 Q5.3 7.1 5.3 10.8 L5.3 23.7 Q5.3 27.4 9 27.4 L21 27.4 Q24.7 27.4 24.7 23.7 L24.7 10.8 Q24.7 7.1 21 7.1 L18.7 7.1"/>
<path d="M15 3.7 L15 19.4 M10 14.4 L15 19.4 L20 14.4"/></g></svg>
<div id="t_j0" style="position:absolute;left:1328.20px;top:246.30px;height:27px;line-height:27px;font-family:'Liberation Mono', monospace;font-size:19.5px;font-weight:400;color:#dcdfe9;white-space:pre;letter-spacing:0.000px;"><span style="color:#dcdfe9">{</span></div>
<div style="position:absolute;left:1329px;top:272px;width:1px;height:30px;background:#4d5e94;"></div>
<div id="t_j1" style="position:absolute;left:1328.20px;top:276.30px;height:27px;line-height:27px;font-family:'Liberation Mono', monospace;font-size:19.5px;font-weight:400;color:#dcdfe9;white-space:pre;letter-spacing:0.000px;">  <span style="color:#b9c3ee">&quot;data&quot;</span><span style="color:#dcdfe9">: {</span></div>
<div style="position:absolute;left:1329px;top:302px;width:1px;height:30px;background:#4d5e94;"></div>
<div style="position:absolute;left:1352px;top:302px;width:1px;height:30px;background:#373f63;"></div>
<div id="t_j2" style="position:absolute;left:1328.20px;top:306.30px;height:27px;line-height:27px;font-family:'Liberation Mono', monospace;font-size:19.5px;font-weight:400;color:#dcdfe9;white-space:pre;letter-spacing:0.000px;">    <span style="color:#b9c3ee">&quot;tracksForHome&quot;</span><span style="color:#dcdfe9">: [</span></div>
<div style="position:absolute;left:1329px;top:332px;width:1px;height:30px;background:#4d5e94;"></div>
<div style="position:absolute;left:1352px;top:332px;width:1px;height:30px;background:#373f63;"></div>
<div style="position:absolute;left:1376px;top:332px;width:1px;height:30px;background:#373f63;"></div>
<div id="t_j3" style="position:absolute;left:1328.20px;top:336.30px;height:27px;line-height:27px;font-family:'Liberation Mono', monospace;font-size:19.5px;font-weight:400;color:#dcdfe9;white-space:pre;letter-spacing:0.000px;">      <span style="color:#dcdfe9">{</span></div>
<div style="position:absolute;left:1329px;top:362px;width:1px;height:30px;background:#4d5e94;"></div>
<div style="position:absolute;left:1352px;top:362px;width:1px;height:30px;background:#373f63;"></div>
<div style="position:absolute;left:1376px;top:362px;width:1px;height:30px;background:#373f63;"></div>
<div style="position:absolute;left:1399px;top:362px;width:1px;height:30px;background:#373f63;"></div>
<div id="t_j4" style="position:absolute;left:1328.20px;top:366.30px;height:27px;line-height:27px;font-family:'Liberation Mono', monospace;font-size:19.5px;font-weight:400;color:#dcdfe9;white-space:pre;letter-spacing:0.000px;">        <span style="color:#b9c3ee">&quot;id&quot;</span><span style="color:#dcdfe9">: </span><span style="color:#f5bf8c">&quot;c_0&quot;</span><span style="color:#dcdfe9">,</span></div>
<div style="position:absolute;left:1329px;top:392px;width:1px;height:30px;background:#4d5e94;"></div>
<div style="position:absolute;left:1352px;top:392px;width:1px;height:30px;background:#373f63;"></div>
<div style="position:absolute;left:1376px;top:392px;width:1px;height:30px;background:#373f63;"></div>
<div style="position:absolute;left:1399px;top:392px;width:1px;height:30px;background:#373f63;"></div>
<div id="t_j5" style="position:absolute;left:1328.20px;top:396.30px;height:27px;line-height:27px;font-family:'Liberation Mono', monospace;font-size:19.5px;font-weight:400;color:#dcdfe9;white-space:pre;letter-spacing:0.000px;">        <span style="color:#b9c3ee">&quot;title&quot;</span><span style="color:#dcdfe9">: </span><span style="color:#f5bf8c">&quot;Cat-stronomy, an</span></div>
<div id="t_j6" style="position:absolute;left:1328.20px;top:426.30px;height:27px;line-height:27px;font-family:'Liberation Mono', monospace;font-size:19.5px;font-weight:400;color:#dcdfe9;white-space:pre;letter-spacing:0.000px;"><span style="color:#f5bf8c">introduction&quot;</span><span style="color:#dcdfe9">,</span></div>
<div style="position:absolute;left:1329px;top:452px;width:1px;height:30px;background:#4d5e94;"></div>
<div style="position:absolute;left:1352px;top:452px;width:1px;height:30px;background:#373f63;"></div>
<div style="position:absolute;left:1376px;top:452px;width:1px;height:30px;background:#373f63;"></div>
<div style="position:absolute;left:1399px;top:452px;width:1px;height:30px;background:#373f63;"></div>
<div id="t_j7" style="position:absolute;left:1328.20px;top:456.30px;height:27px;line-height:27px;font-family:'Liberation Mono', monospace;font-size:19.5px;font-weight:400;color:#dcdfe9;white-space:pre;letter-spacing:0.000px;">        <span style="color:#b9c3ee">&quot;thumbnail&quot;</span><span style="color:#dcdfe9">: </span><span style="color:#f5bf8c">&quot;</span><span style="color:#f5bf8c;text-decoration:underline;text-underline-offset:4px;text-decoration-thickness:1.5px">https://res.cloudinary.</span></div>
<div id="t_j8" style="position:absolute;left:1328.20px;top:486.30px;height:27px;line-height:27px;font-family:'Liberation Mono', monospace;font-size:19.5px;font-weight:400;color:#dcdfe9;white-space:pre;letter-spacing:0.000px;"><span style="color:#f5bf8c;text-decoration:underline;text-underline-offset:4px;text-decoration-thickness:1.5px">com/dety84pbu/image/upload/v1598465568/</span></div>
<div id="t_j9" style="position:absolute;left:1328.20px;top:516.30px;height:27px;line-height:27px;font-family:'Liberation Mono', monospace;font-size:19.5px;font-weight:400;color:#dcdfe9;white-space:pre;letter-spacing:0.000px;"><span style="color:#f5bf8c;text-decoration:underline;text-underline-offset:4px;text-decoration-thickness:1.5px">nebula_cat_djkt9r.jpg</span><span style="color:#f5bf8c">&quot;</span><span style="color:#dcdfe9">,</span></div>
<div style="position:absolute;left:1329px;top:542px;width:1px;height:30px;background:#4d5e94;"></div>
<div style="position:absolute;left:1352px;top:542px;width:1px;height:30px;background:#373f63;"></div>
<div style="position:absolute;left:1376px;top:542px;width:1px;height:30px;background:#373f63;"></div>
<div style="position:absolute;left:1399px;top:542px;width:1px;height:30px;background:#373f63;"></div>
<div id="t_j10" style="position:absolute;left:1328.20px;top:546.30px;height:27px;line-height:27px;font-family:'Liberation Mono', monospace;font-size:19.5px;font-weight:400;color:#dcdfe9;white-space:pre;letter-spacing:0.000px;">        <span style="color:#b9c3ee">&quot;length&quot;</span><span style="color:#dcdfe9">: </span><span style="color:#f5bf8c">2377</span><span style="color:#dcdfe9">,</span></div>
<div style="position:absolute;left:1329px;top:572px;width:1px;height:30px;background:#4d5e94;"></div>
<div style="position:absolute;left:1352px;top:572px;width:1px;height:30px;background:#373f63;"></div>
<div style="position:absolute;left:1376px;top:572px;width:1px;height:30px;background:#373f63;"></div>
<div style="position:absolute;left:1399px;top:572px;width:1px;height:30px;background:#373f63;"></div>
<div id="t_j11" style="position:absolute;left:1328.20px;top:576.30px;height:27px;line-height:27px;font-family:'Liberation Mono', monospace;font-size:19.5px;font-weight:400;color:#dcdfe9;white-space:pre;letter-spacing:0.000px;">        <span style="color:#b9c3ee">&quot;modulesCount&quot;</span><span style="color:#dcdfe9">: </span><span style="color:#f5bf8c">10</span><span style="color:#dcdfe9">,</span></div>
<div style="position:absolute;left:1329px;top:602px;width:1px;height:30px;background:#4d5e94;"></div>
<div style="position:absolute;left:1352px;top:602px;width:1px;height:30px;background:#373f63;"></div>
<div style="position:absolute;left:1376px;top:602px;width:1px;height:30px;background:#373f63;"></div>
<div style="position:absolute;left:1399px;top:602px;width:1px;height:30px;background:#373f63;"></div>
<div id="t_j12" style="position:absolute;left:1328.20px;top:606.30px;height:27px;line-height:27px;font-family:'Liberation Mono', monospace;font-size:19.5px;font-weight:400;color:#dcdfe9;white-space:pre;letter-spacing:0.000px;">        <span style="color:#b9c3ee">&quot;author&quot;</span><span style="color:#dcdfe9">: {</span></div>
<div style="position:absolute;left:1329px;top:632px;width:1px;height:30px;background:#4d5e94;"></div>
<div style="position:absolute;left:1352px;top:632px;width:1px;height:30px;background:#373f63;"></div>
<div style="position:absolute;left:1376px;top:632px;width:1px;height:30px;background:#373f63;"></div>
<div style="position:absolute;left:1399px;top:632px;width:1px;height:30px;background:#373f63;"></div>
<div style="position:absolute;left:1423px;top:632px;width:1px;height:30px;background:#373f63;"></div>
<div id="t_j13" style="position:absolute;left:1328.20px;top:636.30px;height:27px;line-height:27px;font-family:'Liberation Mono', monospace;font-size:19.5px;font-weight:400;color:#dcdfe9;white-space:pre;letter-spacing:0.000px;">          <span style="color:#b9c3ee">&quot;name&quot;</span><span style="color:#dcdfe9">: </span><span style="color:#f5bf8c">&quot;Henri, le Chat Noir&quot;</span><span style="color:#dcdfe9">,</span></div>
<div style="position:absolute;left:1329px;top:662px;width:1px;height:30px;background:#4d5e94;"></div>
<div style="position:absolute;left:1352px;top:662px;width:1px;height:30px;background:#373f63;"></div>
<div style="position:absolute;left:1376px;top:662px;width:1px;height:30px;background:#373f63;"></div>
<div style="position:absolute;left:1399px;top:662px;width:1px;height:30px;background:#373f63;"></div>
<div style="position:absolute;left:1423px;top:662px;width:1px;height:30px;background:#373f63;"></div>
<div id="t_j14" style="position:absolute;left:1328.20px;top:666.30px;height:27px;line-height:27px;font-family:'Liberation Mono', monospace;font-size:19.5px;font-weight:400;color:#dcdfe9;white-space:pre;letter-spacing:0.000px;">          <span style="color:#b9c3ee">&quot;photo&quot;</span><span style="color:#dcdfe9">: </span><span style="color:#f5bf8c">&quot;</span><span style="color:#f5bf8c;text-decoration:underline;text-underline-offset:4px;text-decoration-thickness:1.5px">https://images.unsplash.</span></div>
<div id="t_j15" style="position:absolute;left:1328.20px;top:696.30px;height:27px;line-height:27px;font-family:'Liberation Mono', monospace;font-size:19.5px;font-weight:400;color:#dcdfe9;white-space:pre;letter-spacing:0.000px;"><span style="color:#f5bf8c;text-decoration:underline;text-underline-offset:4px;text-decoration-thickness:1.5px">com/photo-1442291928580-fb5d0856a8f1?</span></div>
<div id="t_j16" style="position:absolute;left:1328.20px;top:726.30px;height:27px;line-height:27px;font-family:'Liberation Mono', monospace;font-size:19.5px;font-weight:400;color:#dcdfe9;white-space:pre;letter-spacing:0.000px;"><span style="color:#f5bf8c;text-decoration:underline;text-underline-offset:4px;text-decoration-thickness:1.5px">ixlib=rb-1.2.1&amp;q=80&amp;fm=jpg&amp;crop=entropy&amp;</span></div>
<div id="t_j17" style="position:absolute;left:1328.20px;top:756.30px;height:27px;line-height:27px;font-family:'Liberation Mono', monospace;font-size:19.5px;font-weight:400;color:#dcdfe9;white-space:pre;letter-spacing:0.000px;"><span style="color:#f5bf8c;text-decoration:underline;text-underline-offset:4px;text-decoration-thickness:1.5px">cs=tinysrgb&amp;w=1080&amp;fit=max&amp;</span></div>
<div id="t_j18" style="position:absolute;left:1328.20px;top:786.30px;height:27px;line-height:27px;font-family:'Liberation Mono', monospace;font-size:19.5px;font-weight:400;color:#dcdfe9;white-space:pre;letter-spacing:0.000px;"><span style="color:#f5bf8c;text-decoration:underline;text-underline-offset:4px;text-decoration-thickness:1.5px">ixid=eyJhcHBfaWQiOjExNzA0OH0</span><span style="color:#f5bf8c">&quot;</span></div>
<div style="position:absolute;left:1329px;top:812px;width:1px;height:30px;background:#4d5e94;"></div>
<div style="position:absolute;left:1352px;top:812px;width:1px;height:30px;background:#373f63;"></div>
<div style="position:absolute;left:1376px;top:812px;width:1px;height:30px;background:#373f63;"></div>
<div style="position:absolute;left:1399px;top:812px;width:1px;height:30px;background:#373f63;"></div>
<div id="t_j19" style="position:absolute;left:1328.20px;top:816.30px;height:27px;line-height:27px;font-family:'Liberation Mono', monospace;font-size:19.5px;font-weight:400;color:#dcdfe9;white-space:pre;letter-spacing:0.000px;">        <span style="color:#dcdfe9">}</span></div>
<div style="position:absolute;left:1329px;top:842px;width:1px;height:30px;background:#4d5e94;"></div>
<div style="position:absolute;left:1352px;top:842px;width:1px;height:30px;background:#373f63;"></div>
<div style="position:absolute;left:1376px;top:842px;width:1px;height:30px;background:#373f63;"></div>
<div id="t_j20" style="position:absolute;left:1328.20px;top:846.30px;height:27px;line-height:27px;font-family:'Liberation Mono', monospace;font-size:19.5px;font-weight:400;color:#dcdfe9;white-space:pre;letter-spacing:0.000px;">      <span style="color:#dcdfe9">},</span></div>
<div style="position:absolute;left:1329px;top:872px;width:1px;height:30px;background:#4d5e94;"></div>
<div style="position:absolute;left:1352px;top:872px;width:1px;height:30px;background:#373f63;"></div>
<div style="position:absolute;left:1376px;top:872px;width:1px;height:30px;background:#373f63;"></div>
<div id="t_j21" style="position:absolute;left:1328.20px;top:876.30px;height:27px;line-height:27px;font-family:'Liberation Mono', monospace;font-size:19.5px;font-weight:400;color:#dcdfe9;white-space:pre;letter-spacing:0.000px;">      <span style="color:#dcdfe9">{</span></div>
<div style="position:absolute;left:1329px;top:902px;width:1px;height:30px;background:#4d5e94;"></div>
<div style="position:absolute;left:1352px;top:902px;width:1px;height:30px;background:#373f63;"></div>
<div style="position:absolute;left:1376px;top:902px;width:1px;height:30px;background:#373f63;"></div>
<div style="position:absolute;left:1399px;top:902px;width:1px;height:30px;background:#373f63;"></div>
<div id="t_j22" style="position:absolute;left:1328.20px;top:906.30px;height:27px;line-height:27px;font-family:'Liberation Mono', monospace;font-size:19.5px;font-weight:400;color:#dcdfe9;white-space:pre;letter-spacing:0.000px;">        <span style="color:#b9c3ee">&quot;id&quot;</span><span style="color:#dcdfe9">: </span><span style="color:#f5bf8c">&quot;c_1&quot;</span><span style="color:#dcdfe9">,</span></div>
<div style="position:absolute;left:1329px;top:932px;width:1px;height:30px;background:#4d5e94;"></div>
<div style="position:absolute;left:1352px;top:932px;width:1px;height:30px;background:#373f63;"></div>
<div style="position:absolute;left:1376px;top:932px;width:1px;height:30px;background:#373f63;"></div>
<div style="position:absolute;left:1399px;top:932px;width:1px;height:30px;background:#373f63;"></div>
<div id="t_j23" style="position:absolute;left:1328.20px;top:936.30px;height:27px;line-height:27px;font-family:'Liberation Mono', monospace;font-size:19.5px;font-weight:400;color:#dcdfe9;white-space:pre;letter-spacing:0.000px;">        <span style="color:#b9c3ee">&quot;title&quot;</span><span style="color:#dcdfe9">: </span><span style="color:#f5bf8c">&quot;Famous Catstronauts&quot;</span><span style="color:#dcdfe9">,</span></div>
<div style="position:absolute;left:1329px;top:962px;width:1px;height:30px;background:#4d5e94;"></div>
<div style="position:absolute;left:1352px;top:962px;width:1px;height:30px;background:#373f63;"></div>
<div style="position:absolute;left:1376px;top:962px;width:1px;height:30px;background:#373f63;"></div>
<div style="position:absolute;left:1399px;top:962px;width:1px;height:30px;background:#373f63;"></div>
<div id="t_j24" style="position:absolute;left:1328.20px;top:966.30px;height:27px;line-height:27px;font-family:'Liberation Mono', monospace;font-size:19.5px;font-weight:400;color:#dcdfe9;white-space:pre;letter-spacing:0.000px;">        <span style="color:#b9c3ee">&quot;thumbnail&quot;</span><span style="color:#dcdfe9">: </span><span style="color:#f5bf8c">&quot;</span><span style="color:#f5bf8c;text-decoration:underline;text-underline-offset:4px;text-decoration-thickness:1.5px">https://res.cloudinary.</span></div>
<div style="position:absolute;left:1328px;top:242px;width:13px;height:31px;background:transparent;border:1.5px solid #7b7a78;box-sizing:border-box;"></div>
</body></html>
